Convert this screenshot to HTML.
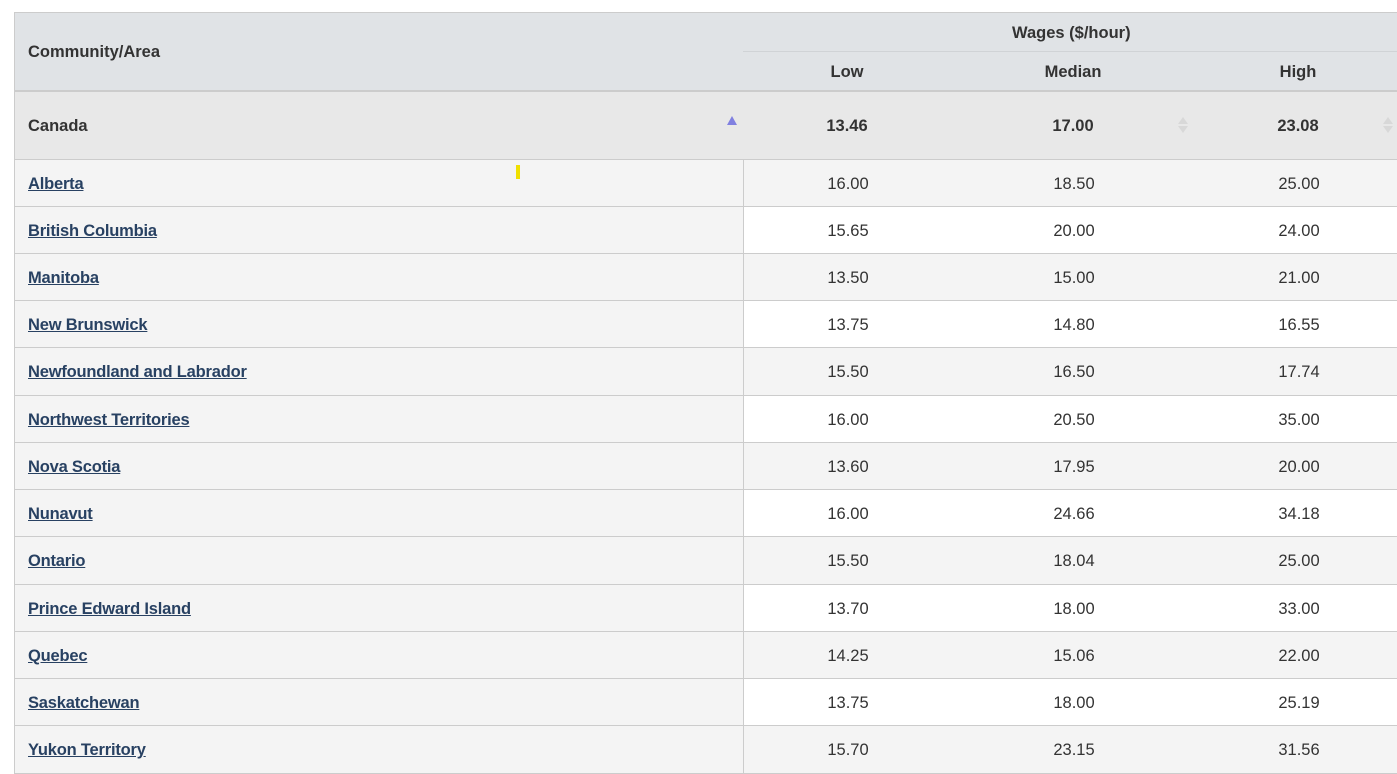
<!DOCTYPE html>
<html><head><meta charset="utf-8"><style>
*{margin:0;padding:0;box-sizing:border-box}
body{width:1397px;height:772px;background:#fff;overflow:hidden;position:relative;font-family:"Liberation Sans",Arial,sans-serif;color:#333;font-size:16.5px}
.a{position:absolute}
.hdr{left:14px;top:12px;width:1383px;height:78px;background:#e0e3e6;border-top:1px solid #ccc;border-left:1px solid #ccc}
.hline{left:743px;top:51px;width:654px;height:1px;background:#d0d3d6}
.b{font-weight:bold;color:#333}
.can{left:14px;top:90px;width:1383px;height:70px;background:#e8e8e8;border-top:2px solid #ccc;border-bottom:1px solid #ccc;border-left:1px solid #ccc}
.row{left:14px;width:1383px;height:47px;border-bottom:1px solid #ccc;border-left:1px solid #ccc;background:#f4f4f4}
.row .w{position:absolute;left:728px;top:0;bottom:0;right:0;border-left:1px solid #ccc}
.row a{position:absolute;left:13px;top:15px;font-weight:bold;color:#284162;text-decoration:underline;letter-spacing:-0.2px}
.n{position:absolute;top:15px;width:120px;text-align:center;color:#333}
.tri{width:0;height:0;border-left:5px solid transparent;border-right:5px solid transparent}
</style></head><body>
<div class="a hdr"></div>
<div class="a hline"></div>
<div class="a b" style="left:28px;top:43px">Community/Area</div>
<div class="a b" style="left:1012px;top:24px;font-weight:bold">Wages ($/hour)</div>
<div class="a b" style="left:787px;top:63px;width:120px;text-align:center">Low</div>
<div class="a b" style="left:1013px;top:63px;width:120px;text-align:center">Median</div>
<div class="a b" style="left:1238px;top:63px;width:120px;text-align:center">High</div>
<div class="a can"></div>
<div class="a b" style="left:28px;top:117px">Canada</div>
<div class="a tri" style="left:727px;top:116px;border-bottom:9px solid #8080e0"></div>
<div class="a b" style="left:787px;top:117px;width:120px;text-align:center">13.46</div>
<div class="a b" style="left:1013px;top:117px;width:120px;text-align:center">17.00</div>
<div class="a b" style="left:1238px;top:117px;width:120px;text-align:center">23.08</div>
<div class="a tri" style="left:1178px;top:117px;border-bottom:7px solid #d8d8d8"></div>
<div class="a tri" style="left:1178px;top:126px;border-top:7px solid #d8d8d8"></div>
<div class="a tri" style="left:1383px;top:117px;border-bottom:7px solid #d8d8d8"></div>
<div class="a tri" style="left:1383px;top:126px;border-top:7px solid #d8d8d8"></div>
<div class="a" style="left:516px;top:165px;width:4px;height:14px;background:#f0e000;z-index:2"></div>

<div class="a row" style="top:160px"><div class="w" style="background:#f4f4f4"></div><a>Alberta</a><span class="n" style="left:773px">16.00</span><span class="n" style="left:999px">18.50</span><span class="n" style="left:1224px">25.00</span></div>
<div class="a row" style="top:207px"><div class="w" style="background:#fff"></div><a>British Columbia</a><span class="n" style="left:773px">15.65</span><span class="n" style="left:999px">20.00</span><span class="n" style="left:1224px">24.00</span></div>
<div class="a row" style="top:254px"><div class="w" style="background:#f4f4f4"></div><a>Manitoba</a><span class="n" style="left:773px">13.50</span><span class="n" style="left:999px">15.00</span><span class="n" style="left:1224px">21.00</span></div>
<div class="a row" style="top:301px"><div class="w" style="background:#fff"></div><a>New Brunswick</a><span class="n" style="left:773px">13.75</span><span class="n" style="left:999px">14.80</span><span class="n" style="left:1224px">16.55</span></div>
<div class="a row" style="top:348px;height:48px"><div class="w" style="background:#f4f4f4"></div><a>Newfoundland and Labrador</a><span class="n" style="left:773px">15.50</span><span class="n" style="left:999px">16.50</span><span class="n" style="left:1224px">17.74</span></div>
<div class="a row" style="top:396px"><div class="w" style="background:#fff"></div><a>Northwest Territories</a><span class="n" style="left:773px">16.00</span><span class="n" style="left:999px">20.50</span><span class="n" style="left:1224px">35.00</span></div>
<div class="a row" style="top:443px"><div class="w" style="background:#f4f4f4"></div><a>Nova Scotia</a><span class="n" style="left:773px">13.60</span><span class="n" style="left:999px">17.95</span><span class="n" style="left:1224px">20.00</span></div>
<div class="a row" style="top:490px"><div class="w" style="background:#fff"></div><a>Nunavut</a><span class="n" style="left:773px">16.00</span><span class="n" style="left:999px">24.66</span><span class="n" style="left:1224px">34.18</span></div>
<div class="a row" style="top:537px;height:48px"><div class="w" style="background:#f4f4f4"></div><a>Ontario</a><span class="n" style="left:773px">15.50</span><span class="n" style="left:999px">18.04</span><span class="n" style="left:1224px">25.00</span></div>
<div class="a row" style="top:585px"><div class="w" style="background:#fff"></div><a>Prince Edward Island</a><span class="n" style="left:773px">13.70</span><span class="n" style="left:999px">18.00</span><span class="n" style="left:1224px">33.00</span></div>
<div class="a row" style="top:632px"><div class="w" style="background:#f4f4f4"></div><a>Quebec</a><span class="n" style="left:773px">14.25</span><span class="n" style="left:999px">15.06</span><span class="n" style="left:1224px">22.00</span></div>
<div class="a row" style="top:679px"><div class="w" style="background:#fff"></div><a>Saskatchewan</a><span class="n" style="left:773px">13.75</span><span class="n" style="left:999px">18.00</span><span class="n" style="left:1224px">25.19</span></div>
<div class="a row" style="top:726px;height:48px"><div class="w" style="background:#f4f4f4"></div><a>Yukon Territory</a><span class="n" style="left:773px">15.70</span><span class="n" style="left:999px">23.15</span><span class="n" style="left:1224px">31.56</span></div>
</body></html>
